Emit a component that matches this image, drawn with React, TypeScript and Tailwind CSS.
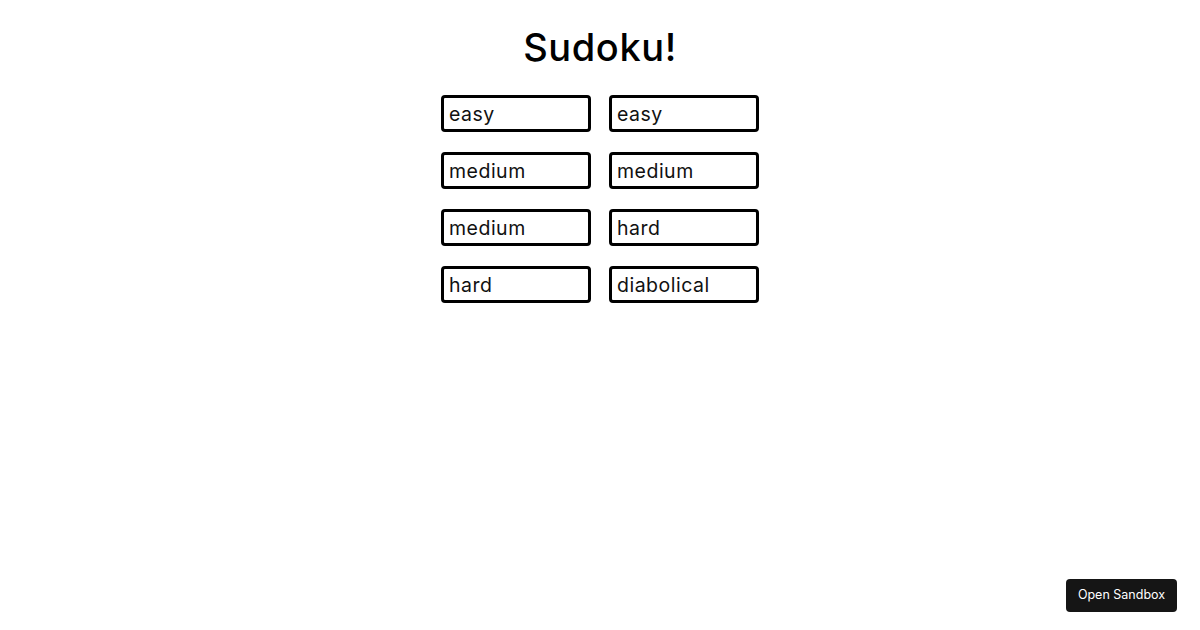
import React from "react";

const levels = ["easy", "easy", "medium", "medium", "medium", "hard", "hard", "diabolical"];

export default function App() {
  return (
    <div className="min-h-[630px] w-full bg-white" style={{ fontFamily: "Inter, 'Noto Sans', sans-serif" }}>
      <div className="flex flex-col items-center">
        <h1 className="mt-[23px] text-[38px] font-medium leading-[48px] text-black tracking-[0.6px]">Sudoku!</h1>
        <div className="mt-[24px] grid grid-cols-[150px_150px] gap-x-[18px] gap-y-[20px]">
          {levels.map((l, i) => (
            <div
              key={i}
              className="flex h-[37px] items-center rounded-[4px] border-[3px] border-black px-[5px] pt-[2px] text-[19.5px] font-normal tracking-[0.5px] text-[#111]"
            >
              {l}
            </div>
          ))}
        </div>
      </div>
      <div
        className="fixed bottom-[18px] right-[23px] flex h-[33px] w-[111px] items-center justify-center rounded-[4px] bg-[#151515] text-[12.5px] text-white"
        style={{ fontFamily: "Inter, 'Liberation Sans', sans-serif" }}
      >
        Open Sandbox
      </div>
    </div>
  );
}
